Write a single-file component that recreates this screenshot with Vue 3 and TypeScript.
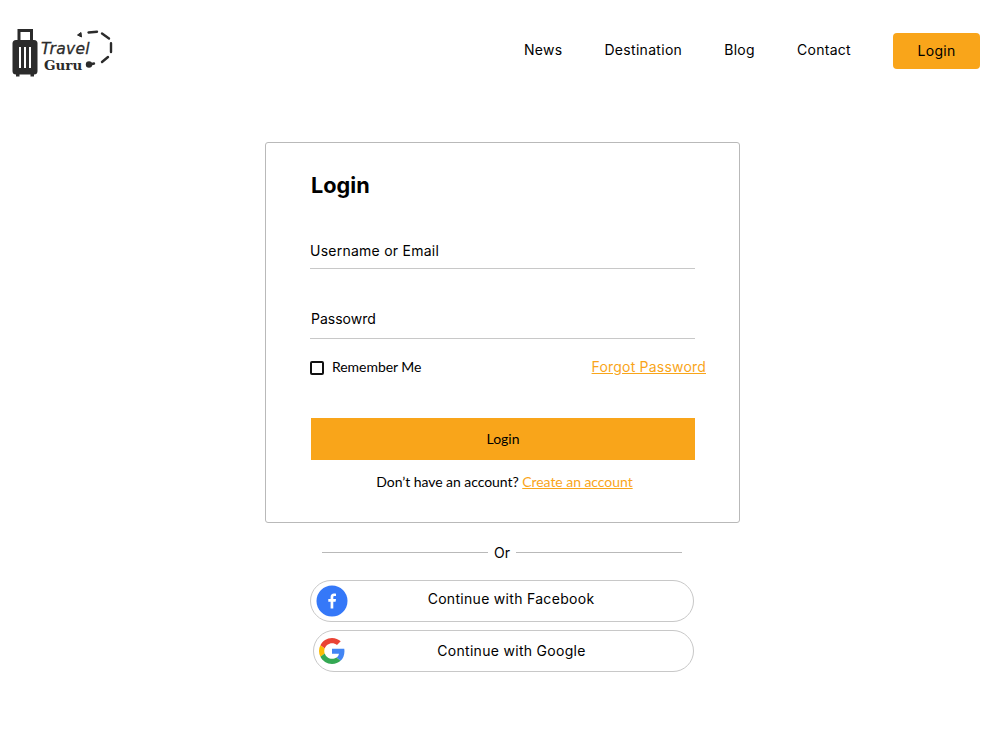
<template>
  <div class="page">
    <header class="header">
      <a class="logo" href="#" aria-label="Travel Guru">
        <svg width="104" height="52" viewBox="0 0 104 52">
          <path d="M7 14V3.500h12.500V14" fill="none" stroke="#2b2b2b" stroke-width="3" />
          <rect x="0.500" y="13" width="25" height="34.500" rx="3.500" fill="#2b2b2b" />
          <rect x="4" y="47" width="3.500" height="2.500" fill="#2b2b2b" />
          <rect x="18.500" y="47" width="3.500" height="2.500" fill="#2b2b2b" />
          <path d="M8 20v21M13 20v21M18 20v21" stroke="#fff" stroke-width="2" />
          <text x="29" y="26.500" class="logo-travel">Travel</text>
          <text x="32" y="43" class="logo-guru">Guru</text>
          <path
            d="M76.500 5.500l8.500-.8M90 6.500l7 5M99 16.300V25M96 30l-6 5M82 36.500l-2 .5"
            fill="none"
            stroke="#2b2b2b"
            stroke-width="2.400"
            stroke-linecap="round"
          />
          <path d="M65.500 8l3.500-2.500 .5 4.500z" fill="#2b2b2b" stroke="#2b2b2b" stroke-width="1" stroke-linejoin="round" />
          <circle cx="77" cy="37.500" r="3.200" fill="#2b2b2b" />
        </svg>
      </a>
      <nav class="nav">
        <a v-for="item in navItems" :key="item" class="nav__link" href="#">{{ item }}</a>
        <button class="nav__login" type="button">Login</button>
      </nav>
    </header>

    <main class="main">
      <form class="card" @submit.prevent>
        <h1 class="card__title">Login</h1>
        <div class="field field--user">Username or Email</div>
        <div class="field field--pass">Passowrd</div>
        <div class="options">
          <label class="remember">
            <span class="remember__box"></span>
            Remember Me
          </label>
          <a class="link link--forgot" href="#">Forgot Password</a>
        </div>
        <button class="submit" type="submit">Login</button>
        <p class="signup">Don’t have an account? <a class="link" href="#">Create an account</a></p>
      </form>

      <div class="divider"><span>Or</span></div>

      <button class="social social--fb" type="button">
        <svg class="social__icon" width="32" height="32" viewBox="0 0 32 32">
          <circle cx="16" cy="16" r="15.500" fill="#3578f8" />
          <path
            d="M17.300 23.500v-6.800h2.300l.4-2.700h-2.700v-1.600c0-.8.300-1.300 1.300-1.300h1.400V8.700c-.3 0-1.100-.1-2-.1-2.100 0-3.400 1.200-3.400 3.500V14h-2.300v2.700h2.300v6.800z"
            fill="#fff"
          />
        </svg>
        Continue with Facebook
      </button>
      <button class="social social--google" type="button">
        <svg class="social__icon" width="26" height="26" viewBox="0 0 48 48">
          <path fill="#EA4335" d="M24 9.500c3.500 0 6.700 1.200 9.200 3.600l6.900-6.900C35.900 2.400 30.500 0 24 0 14.600 0 6.500 5.400 2.600 13.200l8 6.200C12.500 13.700 17.800 9.500 24 9.500z" />
          <path fill="#4285F4" d="M47 24.500c0-1.600-.1-3.100-.4-4.500H24v9h12.900c-.6 3-2.200 5.500-4.700 7.200l7.700 6C44.400 37.900 47 31.800 47 24.500z" />
          <path fill="#FBBC05" d="M10.500 28.600c-.5-1.400-.8-3-.8-4.600s.3-3.200.8-4.600l-8-6.200C.9 16.500 0 20.100 0 24s.9 7.500 2.600 10.800z" />
          <path fill="#34A853" d="M24 48c6.500 0 11.900-2.100 15.900-5.800l-7.700-6c-2.200 1.400-4.900 2.300-8.200 2.300-6.200 0-11.500-4.200-13.400-9.900l-8 6.200C6.500 42.600 14.600 48 24 48z" />
        </svg>
        Continue with Google
      </button>
    </main>
  </div>
</template>

<script setup lang="ts">
const navItems: string[] = ['News', 'Destination', 'Blog', 'Contact']
</script>

<style>
html,
body {
  margin: 0;
  background: #fff;
}
</style>

<style scoped>
.page {
  height: 750px;
  overflow: hidden;
  font-family: Inter, 'Noto Sans', sans-serif;
  color: #000;
}

.header {
  display: flex;
  justify-content: space-between;
  align-items: flex-start;
  padding: 27px 20px 0 12px;
  height: 115px;
  box-sizing: border-box;
}

.logo { display: block; height: 52px; }

.logo-travel {
  font-family: 'DejaVu Sans', sans-serif;
  font-style: italic;
  font-size: 15.500px;
  letter-spacing: 0.3px;
  fill: #2b2b2b;
  stroke: #2b2b2b;
  stroke-width: 0.3px;
}

.logo-guru {
  font-family: 'DejaVu Serif', serif;
  font-weight: 700;
  font-size: 13.500px;
  fill: #2b2b2b;
}

.nav {
  display: flex;
  align-items: center;
  padding-top: 5px;
}

.nav__link {
  color: #000;
  text-decoration: none;
  font-size: 14px;
  letter-spacing: 0.3px;
  margin-right: 42px;
  margin-bottom: 2px;
}

.nav__login {
  width: 87px;
  height: 36px;
  margin-top: 1px;
  padding-bottom: 3px;
  border: 0;
  border-radius: 4px;
  background: #f9a51a;
  font: inherit;
  font-size: 14px;
  letter-spacing: 0.3px;
  color: #000;
}

.main {
  display: flex;
  flex-direction: column;
  align-items: flex-start;
  padding: 27px 0 0 265px;
}

.card {
  width: 475px;
  height: 381px;
  box-sizing: border-box;
  border: 1px solid #b9b9b9;
  border-radius: 3px;
  padding: 28px 44px 0 45px;
}

.card__title {
  margin: 0;
  font-size: 21.700px;
  line-height: 29px;
  font-weight: 700;
}

.field {
  margin-left: -1px;
  font-size: 14px;
  line-height: 20px;
  border-bottom: 1px solid #c8c8c8;
  padding-bottom: 7px;
}

.field--user {
  margin-top: 41px;
  letter-spacing: 0.25px;
}

.field--pass {
  margin-top: 40px;
  padding-bottom: 9px;
  padding-left: 1px;
}

.options {
  display: flex;
  justify-content: space-between;
  align-items: center;
  margin-top: 18px;
  margin-right: -11px;
  font-family: Lato, sans-serif;
}

.remember {
  display: flex;
  align-items: center;
  gap: 8px;
  margin-left: -1px;
  font-size: 14px;
  letter-spacing: -0.05px;
}

.remember__box {
  width: 10px;
  height: 10px;
  border: 2px solid #111;
  border-radius: 2px;
  margin-top: 4px;
}

.link {
  color: #f9a51a;
  text-decoration: underline;
}

.link--forgot {
  font-size: 14px;
  letter-spacing: 0.2px;
  font-family: Inter, sans-serif;
}

.submit {
  display: block;
  width: 100%;
  height: 42px;
  margin-top: 43px;
  padding: 0 0 2px;
  border: 0;
  background: #f9a51a;
  font-family: Lato, sans-serif;
  font-size: 14px;
  color: #000;
}

.signup {
  margin: 12px 0 0;
  padding-left: 3px;
  text-align: center;
  font-family: Lato, sans-serif;
  font-size: 14px;
  letter-spacing: -0.05px;
  line-height: 19px;
}

.divider {
  display: flex;
  align-items: center;
  gap: 6px;
  width: 360px;
  margin: 20px 0 0 57px;
  height: 18px;
  font-size: 14px;
}

.divider::before,
.divider::after {
  content: '';
  flex: 1;
  height: 1px;
  background: #b9b9b9;
}

.social {
  position: relative;
  display: block;
  height: 42px;
  border: 1px solid #c8c8c8;
  border-radius: 21px;
  background: #fff;
  font-family: Inter, sans-serif;
  font-size: 14px;
  letter-spacing: 0.3px;
  color: #000;
  text-align: center;
}

.social--fb {
  width: 384px;
  margin: 19px 0 0 45px;
  padding: 0 0 6px 18px;
}

.social--google {
  width: 381px;
  margin: 8px 0 0 48px;
  padding: 0 0 1px 16px;
}

.social__icon {
  position: absolute;
  top: 50%;
  transform: translateY(-50%);
}

.social--fb .social__icon { left: 5px; }
.social--google .social__icon { left: 5px; }
</style>
